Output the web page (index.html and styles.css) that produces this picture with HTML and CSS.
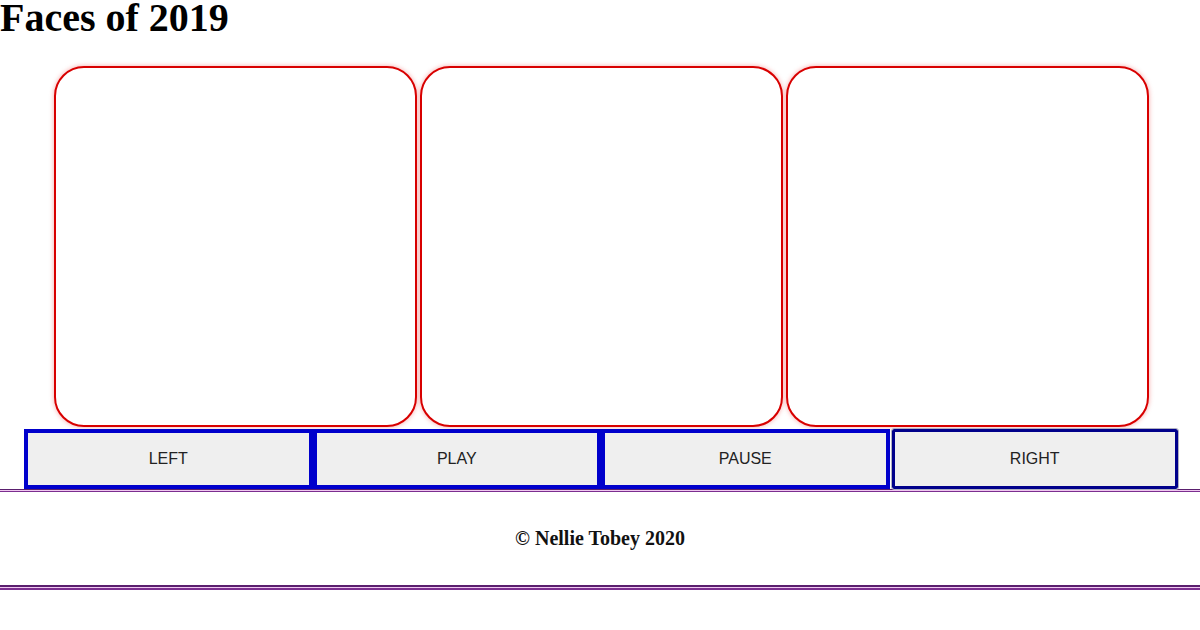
FILE: index.html
```html
<!DOCTYPE html>
<html>
<head>
<meta charset="utf-8">
<title>Faces of 2019</title>
<link rel="stylesheet" href="styles.css">
</head>
<body>
<h1 class="title">Faces of 2019</h1>
<div class="cards">
  <div class="card"></div>
  <div class="card"></div>
  <div class="card"></div>
</div>
<div class="controls">
  <button class="btn">LEFT</button>
  <button class="btn">PLAY</button>
  <button class="btn">PAUSE</button>
  <button class="btn btn-right">RIGHT</button>
</div>
<footer class="footer">
  <p class="copy">© Nellie Tobey 2020</p>
</footer>
</body>
</html>
```
FILE: styles.css
```css
html, body {
  margin: 0;
  padding: 0;
  background: #fff;
}
body {
  font-family: "Liberation Serif", "Times New Roman", serif;
}
.title {
  margin: 0;
  font-size: 40px;
  line-height: 36px;
  font-weight: bold;
  color: #000;
  height: 66px;
}
.cards {
  display: flex;
  justify-content: center;
  gap: 3px;
  height: 363px;
  padding-left: 2px;
}
.card {
  width: 359px;
  height: 357px;
  border: 2.5px solid #d80000;
  border-radius: 30px;
  box-shadow: 0 0 5px rgba(230, 0, 0, 0.35);
  background: #fff;
}
.controls {
  display: flex;
  margin: 0 22px 0 24px;
}
.btn {
  flex: 1;
  height: 60px;
  margin: 0;
  background: #efefef;
  border: 4px solid #0000cc;
  font-family: "Liberation Sans", Arial, sans-serif;
  font-size: 16px;
  color: #222;
  padding: 0;
}
.btn-right {
  margin-left: 2px;
  border: 3px solid #00008b;
  outline: 1px solid #b0b0c0;
  border-radius: 2px;
}
.footer {
  border-top: 1px solid #5a1f6e;
}
.footer::before {
  content: "";
  display: block;
  height: 1px;
  background: #f0c8f0;
  border-bottom: 1px solid #7b2f8f;
}
.footer::after {
  content: "";
  display: block;
  height: 1px;
  background: #f0c8f0;
  border-top: 2px solid #5a1f6e;
  border-bottom: 2px solid #7b2f8f;
}
.copy {
  margin: 0;
  height: 93px;
  line-height: 93px;
  text-align: center;
  font-weight: bold;
  font-size: 20px;
  color: #111;
}
```
